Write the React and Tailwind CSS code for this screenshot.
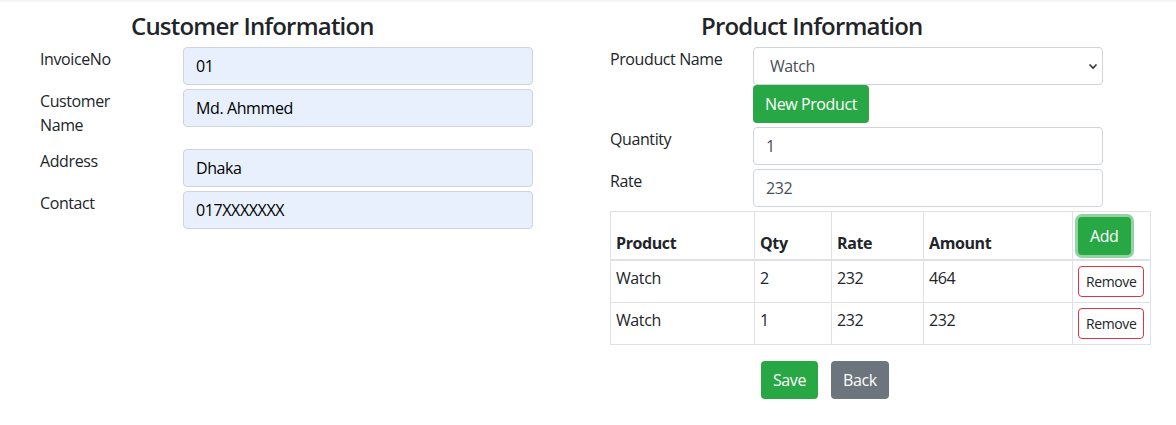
import { useState } from "react";

const font = { fontFamily: '"Open Sans", "Noto Sans", sans-serif' };

const Field = ({ label, children }) => (
  <div className="flex mb-[4px]">
    <label className="w-[143px] shrink-0 pr-[32px] mb-[8px] leading-[24px] text-[16px] text-[#212529]">
      {label}
    </label>
    <div className="w-[350px]">{children}</div>
  </div>
);

const Input = ({ value, autofill }) => (
  <input
    readOnly
    value={value}
    className={
      "block w-full h-[38px] px-[12px] border border-[#ced4da] rounded-[4px] text-[16px] tracking-[-0.4px] outline-none " +
      (autofill ? "bg-[#e8f0fe] text-[#000]" : "bg-white text-[#495057]")
    }
  />
);

export default function App() {
  const [rows, setRows] = useState([
    { product: "Watch", qty: 2, rate: 232 },
    { product: "Watch", qty: 1, rate: 232 },
  ]);

  return (
    <div style={font} className="w-[1176px] h-[425px] bg-white border-t-[2px] border-[#f4f4f4] text-[#212529] tracking-[-0.4px]">
      <div className="flex">
        {/* customer */}
        <div className="w-[610px] pl-[40px]">
          <h3 className="mt-[7px] mb-[4px] h-[34px] leading-[34px] text-[24px] font-semibold tracking-[-0.8px] pl-[91px]">
            Customer Information
          </h3>
          <Field label="InvoiceNo">
            <Input value="01" autofill />
          </Field>
          <Field label="Customer Name">
            <Input value="Md. Ahmmed" autofill />
          </Field>
          <Field label="Address">
            <Input value="Dhaka" autofill />
          </Field>
          <Field label="Contact">
            <Input value="017XXXXXXX" autofill />
          </Field>
        </div>

        {/* product */}
        <div className="w-[566px]">
          <h3 className="mt-[7px] mb-[4px] h-[34px] leading-[34px] text-[24px] font-semibold tracking-[-0.8px] pl-[91px]">
            Product Information
          </h3>
          <div className="flex">
            <label className="w-[143px] shrink-0 leading-[24px] text-[16px]">Prouduct Name</label>
            <div className="w-[350px]">
              <div className="relative">
                <select className="appearance-none block w-full h-[38px] pl-[16px] border border-[#ced4da] rounded-[4px] bg-white text-[16px] text-[#495057] outline-none">
                  <option>Watch</option>
                </select>
                <svg className="absolute right-[5px] top-[16px]" width="10" height="7" viewBox="0 0 10 7">
                  <path d="M1.5 1.5 L5 5 L8.5 1.5" fill="none" stroke="#333" strokeWidth="1.6" />
                </svg>
              </div>
              <button className="h-[38px] px-[12px] rounded-[4px] bg-[#28a745] text-white text-[16px]">
                New Product
              </button>
            </div>
          </div>
          <div className="h-[4px]" />
          <Field label="Quantity">
            <Input value="1" />
          </Field>
          <Field label="Rate">
            <Input value="232" />
          </Field>

          <table className="table-fixed border-collapse w-[540px] text-[16px]">
            <colgroup>
              <col className="w-[144px]" />
              <col className="w-[77px]" />
              <col className="w-[92px]" />
              <col className="w-[149px]" />
              <col className="w-[78px]" />
            </colgroup>
            <thead>
              <tr>
                {["Product", "Qty", "Rate", "Amount"].map((h) => (
                  <th
                    key={h}
                    className="border border-[#dee2e6] border-b-2 px-[5px] pt-[5px] pb-[4px] text-left align-bottom font-bold leading-[24px]"
                  >
                    {h}
                  </th>
                ))}
                <th className="border border-[#dee2e6] border-b-2 px-[5px] pt-[5px] pb-[4px] text-left align-bottom">
                  <button
                    onClick={() => setRows([...rows, { product: "Watch", qty: 1, rate: 232 }])}
                    className="h-[38px] px-[12px] rounded-[4px] bg-[#28a745] text-white text-[16px] font-normal shadow-[0_0_0_3px_rgba(40,167,69,0.5)]"
                  >
                    Add
                  </button>
                </th>
              </tr>
            </thead>
            <tbody>
              {rows.map((r, i) => (
                <tr key={i}>
                  <td className="border border-[#dee2e6] px-[5px] py-[5px] align-top leading-[24px]">{r.product}</td>
                  <td className="border border-[#dee2e6] px-[5px] py-[5px] align-top leading-[24px]">{r.qty}</td>
                  <td className="border border-[#dee2e6] px-[5px] py-[5px] align-top leading-[24px]">{r.rate}</td>
                  <td className="border border-[#dee2e6] px-[5px] py-[5px] align-top leading-[24px]">{r.qty * r.rate}</td>
                  <td className="border border-[#dee2e6] px-[5px] py-[5px] align-top">
                    <button
                      onClick={() => setRows(rows.filter((_, j) => j !== i))}
                      className="h-[31px] px-[7px] border border-[#dc3545] rounded-[4px] text-[14px] text-[#212529] bg-white"
                    >
                      Remove
                    </button>
                  </td>
                </tr>
              ))}
            </tbody>
          </table>

          <div className="flex gap-[13px] mt-[16px] pl-[151px]">
            <button className="h-[38px] px-[12px] rounded-[4px] bg-[#28a745] text-white text-[16px]">Save</button>
            <button className="h-[38px] px-[12px] rounded-[4px] bg-[#6c757d] text-white text-[16px]">Back</button>
          </div>
        </div>
      </div>
    </div>
  );
}
